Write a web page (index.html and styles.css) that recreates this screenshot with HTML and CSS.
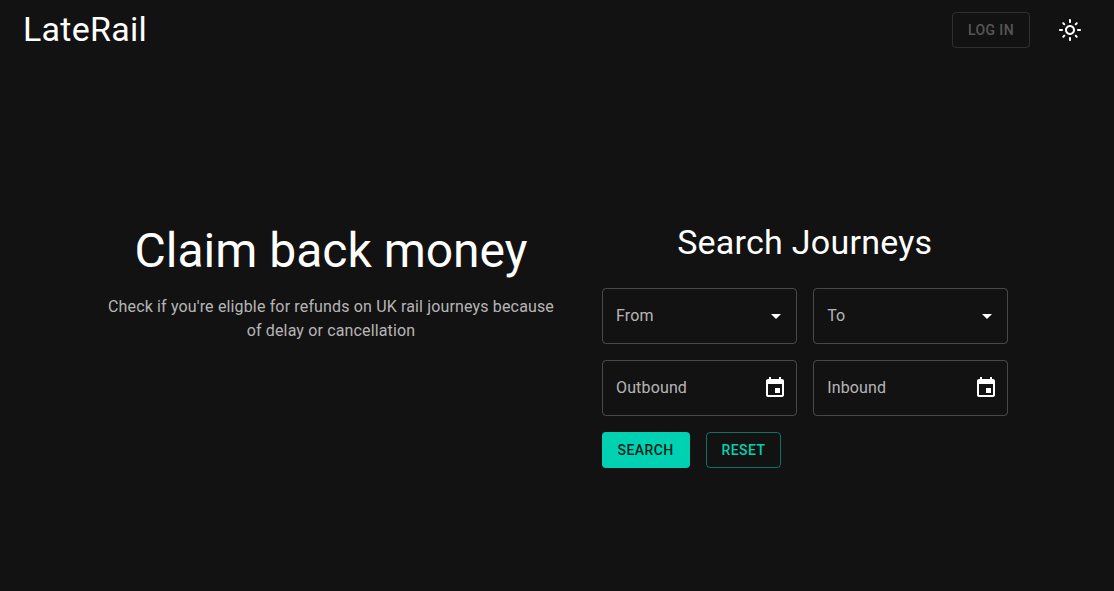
FILE: index.html
```html
<!DOCTYPE html>
<html lang="en">
<head>
<meta charset="utf-8">
<title>LateRail</title>
<link rel="stylesheet" href="styles.css">
</head>
<body>
<header class="nav">
  <div class="logo">LateRail</div>
  <div class="nav-actions">
    <button class="btn btn-login" type="button" disabled>Log in</button>
    <button class="theme" type="button" aria-label="Toggle theme">
      <svg class="icon" viewBox="0 0 24 24"><path d="M12 9c1.65 0 3 1.35 3 3s-1.35 3-3 3-3-1.35-3-3 1.35-3 3-3m0-2c-2.76 0-5 2.24-5 5s2.24 5 5 5 5-2.24 5-5-2.24-5-5-5zM2 13h2c.55 0 1-.45 1-1s-.45-1-1-1H2c-.55 0-1 .45-1 1s.45 1 1 1zm18 0h2c.55 0 1-.45 1-1s-.45-1-1-1h-2c-.55 0-1 .45-1 1s.45 1 1 1zM11 2v2c0 .55.45 1 1 1s1-.45 1-1V2c0-.55-.45-1-1-1s-1 .45-1 1zm0 18v2c0 .55.45 1 1 1s1-.45 1-1v-2c0-.55-.45-1-1-1s-1 .45-1 1zM5.99 4.58c-.39-.39-1.03-.39-1.41 0-.39.39-.39 1.03 0 1.41l1.06 1.06c.39.39 1.03.39 1.41 0s.39-1.03 0-1.41L5.99 4.58zm12.37 12.37c-.39-.39-1.03-.39-1.41 0-.39.39-.39 1.03 0 1.41l1.06 1.06c.39.39 1.03.39 1.41 0 .39-.39.39-1.03 0-1.41l-1.06-1.06zm1.06-10.96c.39-.39.39-1.03 0-1.41-.39-.39-1.03-.39-1.41 0l-1.06 1.06c-.39.39-.39 1.03 0 1.41s1.03.39 1.41 0l1.06-1.06zM7.05 18.36c.39-.39.39-1.03 0-1.41-.39-.39-1.03-.39-1.41 0l-1.06 1.06c-.39.39-.39 1.03 0 1.41s1.03.39 1.41 0l1.06-1.06z"/></svg>
    </button>
  </div>
</header>
<main class="main">
  <section class="intro">
    <h1 class="headline">Claim back money</h1>
    <p class="lead">Check if you're eligble for refunds on UK rail journeys because of delay or cancellation</p>
  </section>
  <section class="search">
    <h2 class="search-title">Search Journeys</h2>
    <form class="fields">
      <div class="field field-select"><span>From</span><svg class="icon" viewBox="0 0 24 24"><path d="M7 10l5 5 5-5z"/></svg></div>
      <div class="field field-select"><span>To</span><svg class="icon" viewBox="0 0 24 24"><path d="M7 10l5 5 5-5z"/></svg></div>
      <div class="field"><span>Outbound</span><svg class="icon" viewBox="0 0 24 24"><path d="M17 12h-5v5h5v-5zM16 1v2H8V1H6v2H5c-1.11 0-1.99.9-1.99 2L3 19c0 1.1.89 2 2 2h14c1.1 0 2-.9 2-2V5c0-1.1-.9-2-2-2h-1V1h-2zm3 18H5V8h14v11z"/></svg></div>
      <div class="field"><span>Inbound</span><svg class="icon" viewBox="0 0 24 24"><path d="M17 12h-5v5h5v-5zM16 1v2H8V1H6v2H5c-1.11 0-1.99.9-1.99 2L3 19c0 1.1.89 2 2 2h14c1.1 0 2-.9 2-2V5c0-1.1-.9-2-2-2h-1V1h-2zm3 18H5V8h14v11z"/></svg></div>
    </form>
    <div class="actions">
      <button class="btn btn-search" type="button">Search</button>
      <button class="btn btn-reset" type="button">Reset</button>
    </div>
  </section>
</main>
</body>
</html>
```

FILE: styles.css
```css
* { box-sizing: border-box; }
html {
  background: #121212;
}
body {
  margin: 0;
  min-height: 100vh;
  color: #fff;
  font-family: Roboto, "Liberation Sans", sans-serif;
}
.nav {
  display: flex;
  align-items: center;
  justify-content: space-between;
  height: 60px;
  padding: 0 20px 0 23px;
}
.logo {
  font-size: 34px;
  font-weight: 400;
  line-height: 1.235;
  letter-spacing: 0.25px;
}
.nav-actions {
  display: flex;
  align-items: center;
  gap: 16px;
}
.btn {
  display: inline-flex;
  align-items: center;
  justify-content: center;
  height: 36px;
  padding: 0 15px;
  border-radius: 4px;
  border: 1px solid transparent;
  background: none;
  font-family: inherit;
  font-size: 14px;
  font-weight: 500;
  letter-spacing: 0.4px;
  text-transform: uppercase;
}
.btn-login {
  border-color: rgba(255, 255, 255, 0.12);
  color: rgba(255, 255, 255, 0.3);
}
.theme {
  display: flex;
  align-items: center;
  justify-content: center;
  width: 48px;
  height: 48px;
  padding: 0;
  border: 0;
  background: none;
}
.icon {
  display: block;
  width: 24px;
  height: 24px;
  fill: #fff;
  flex: none;
}
.main {
  display: flex;
  align-items: flex-start;
  gap: 39.6px;
  padding: 162px 0 0 100px;
}
.intro {
  width: 462px;
  padding-top: 1px;
  text-align: center;
}
.headline {
  margin: 0 0 16px;
  font-size: 48px;
  font-weight: 400;
  line-height: 1.167;
}
.lead {
  margin: 0;
  font-size: 16px;
  line-height: 24px;
  letter-spacing: 0.15px;
  color: rgba(255, 255, 255, 0.7);
}
.search {
  width: 406.4px;
}
.search-title {
  margin: 0 0 24px;
  text-align: center;
  font-size: 34px;
  font-weight: 400;
  line-height: 1.235;
  letter-spacing: 0.25px;
}
.fields {
  display: grid;
  grid-template-columns: 1fr 1fr;
  gap: 16px;
}
.field {
  display: flex;
  align-items: center;
  justify-content: space-between;
  height: 56px;
  padding: 0 9px 0 13.4px;
  border: 1px solid rgba(255, 255, 255, 0.23);
  border-radius: 4px;
  font-size: 16px;
  letter-spacing: 0.15px;
  color: rgba(255, 255, 255, 0.7);
}
.field-select {
  padding-right: 8px;
}
.actions {
  display: flex;
  gap: 16px;
  margin-top: 16px;
}
.btn-search {
  background: #00d1b2;
  color: rgba(0, 0, 0, 0.87);
}
.btn-reset {
  border-color: rgba(0, 209, 178, 0.5);
  color: #00d1b2;
}
```
